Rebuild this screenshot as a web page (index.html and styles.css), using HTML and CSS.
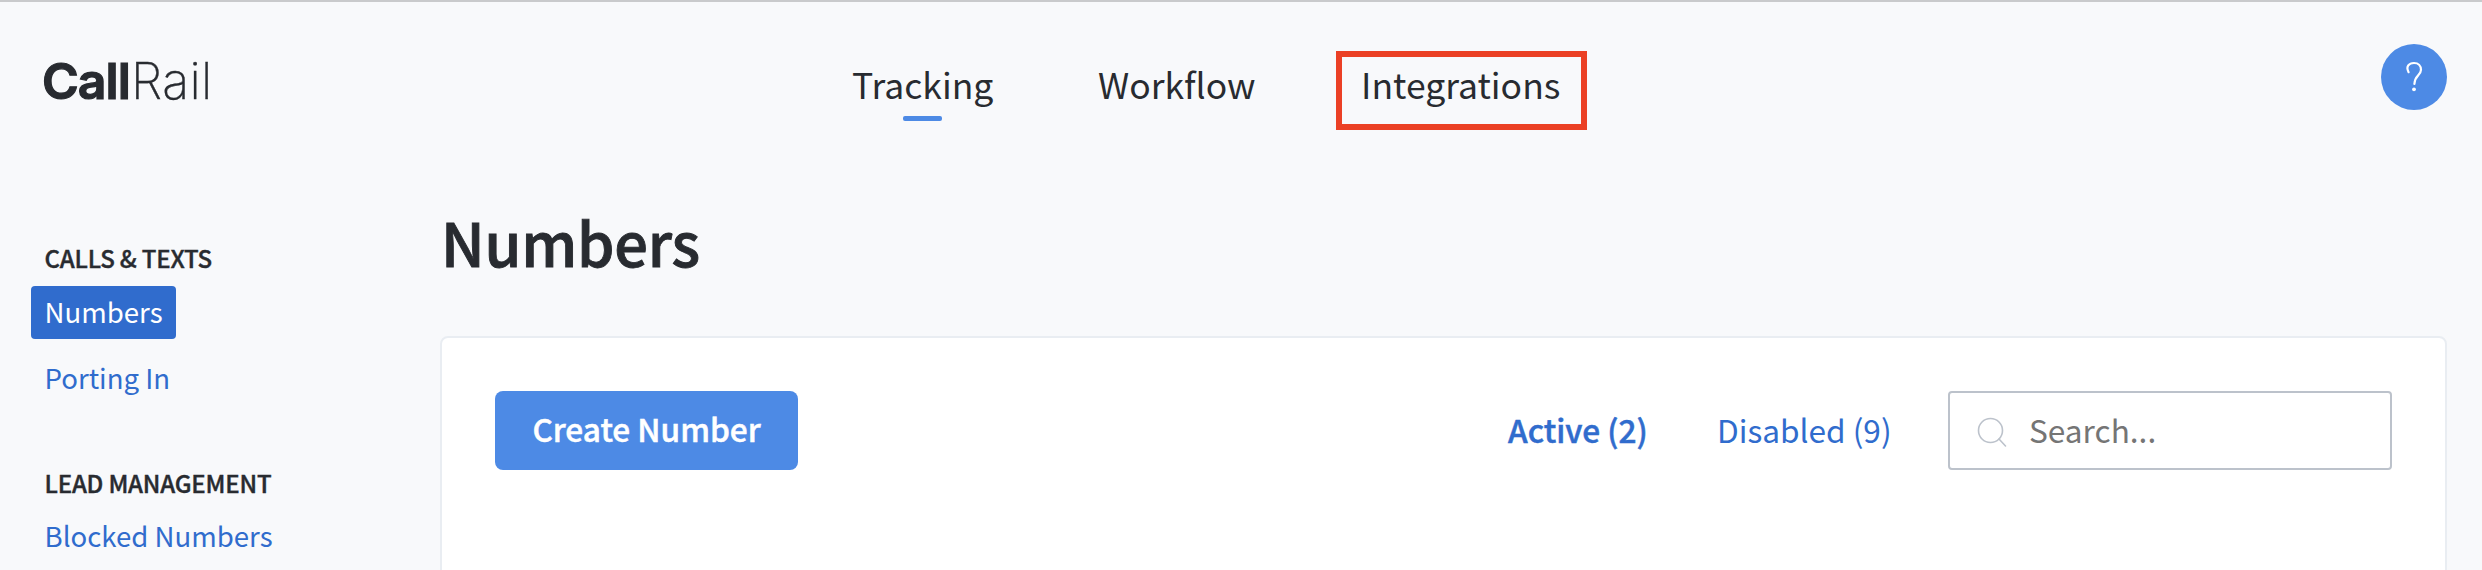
FILE: index.html
```html
<!DOCTYPE html>
<html lang="en">
<head>
<meta charset="utf-8">
<title>CallRail - Numbers</title>
<link rel="stylesheet" href="styles.css">
</head>
<body>
<header class="header">
  <a class="brand"><span class="brand-call">Call</span><span class="brand-rail">Rail</span></a>
  <nav class="nav">
    <a class="nav-link nav-tracking">Tracking</a>
    <a class="nav-link nav-workflow">Workflow</a>
    <a class="nav-link nav-integrations">Integrations</a>
  </nav>
  <button class="help" aria-label="Help">
    <svg width="66" height="66" viewBox="0 0 66 66" fill="none" stroke="#fff" stroke-width="2.200" stroke-linecap="round"><path d="M27.600 28.200C24.500 22.500 28 19 33 19C37.500 19 40 22 40 25.800C40 31.500 33.600 31.500 33.400 40"/><circle cx="33" cy="45.300" r="1.900" fill="#fff" stroke="none"/></svg>
  </button>
</header>
<div class="body">
  <aside class="sidebar">
    <h2 class="group">CALLS &amp; TEXTS</h2>
    <a class="side-link active">Numbers</a>
    <a class="side-link porting">Porting In</a>
    <h2 class="group lead">LEAD MANAGEMENT</h2>
    <a class="side-link blocked">Blocked Numbers</a>
  </aside>
  <main class="main">
    <h1 class="title">Numbers</h1>
    <section class="card">
      <button class="create">Create Number</button>
      <a class="tab tab-active">Active (2)</a>
      <a class="tab tab-disabled">Disabled (9)</a>
      <label class="search">
        <svg class="search-icon" width="30" height="30" viewBox="0 0 30 30" fill="none" stroke="#bcc2cb" stroke-width="1.600" stroke-linecap="round"><circle cx="13.500" cy="13.500" r="12"/><path d="M22 22l6.500 7"/></svg>
        <span class="placeholder">Search...</span>
      </label>
    </section>
  </main>
</div>
</body>
</html>
```
FILE: styles.css
```css
* { box-sizing: border-box; }
body {
  margin: 0;
  height: 570px;
  overflow: hidden;
  background: #f8f9fb;
  border-top: 2px solid #c9cacc;
  color: #282b30;
  font-family: "Noto Sans CJK SC", "Noto Sans", sans-serif;
  white-space: nowrap;
}
button { border: 0; padding: 0; font-family: inherit; }
.header { display: flex; height: 198px; padding: 0 35px 0 42px; align-items: flex-start; }
.brand { width: 810px; padding-top: 51px; font: 50px/56px Inter, sans-serif; color: #282b30; display: flex; }
.brand-call { font-weight: 600; letter-spacing: -1px; width: 89px; -webkit-text-stroke: 1.2px #282b30; stroke-linejoin: round; }
.brand-rail { font-weight: 200; letter-spacing: 0.4px; -webkit-text-stroke: 0.3px #282b30; }
.nav { display: flex; padding-top: 49px; }
.nav-link { font-size: 35.500px; line-height: 48px; }
.nav-tracking { width: 246px; padding-top: 9px; }
.nav-tracking::after { content: ""; display: block; width: 39px; height: 5px; margin: 8px 0 0 51px; border-radius: 2px; background: #4d8ae5; }
.nav-workflow { width: 238px; padding-top: 9px; }
.nav-integrations { width: 251px; height: 79px; padding: 3px 0 0 19px; border: 6px solid #eb4025; }
.help { margin: 42px 0 0 auto; width: 66px; height: 66px; border-radius: 50%; background: #4d8ae5; }
.help svg { display: block; }
.body { display: flex; height: 370px; }
.sidebar { width: 440px; padding: 42px 0 0 31px; display: flex; flex-direction: column; align-items: flex-start; }
.group { margin: 0; padding-left: 13.500px; height: 44px; font-size: 24px; line-height: 32px; font-weight: 500; letter-spacing: -0.200px; -webkit-text-stroke: 0.4px currentColor; }
.side-link { height: 53px; padding: 0 13.500px; font-size: 27.600px; line-height: 50px; color: #306ccd; }
.side-link.active { width: 145px; background: #306ccd; color: #fff; border-radius: 4px; }
.porting { margin-top: 13px; }
.lead { margin-top: 62px; }
.blocked { line-height: 48px; }
.main { width: 2007px; }
.title { margin: 0; padding-left: 1px; height: 136px; font-size: 59.500px; line-height: 82px; font-weight: 500; letter-spacing: -0.200px; -webkit-text-stroke: 0.9px currentColor; }
.card { height: 240px; background: #fff; border: 2px solid #e9edf2; border-radius: 8px 8px 0 0; padding: 53px 53px 0; display: flex; }
.create { width: 303px; height: 79px; padding-bottom: 4px; border-radius: 8px; background: #4d8ae5; color: #fff; font-size: 31.600px; font-weight: 500; line-height: 75px; -webkit-text-stroke: 0.5px currentColor; }
.tab { font-size: 31.600px; line-height: 77px; color: #306ccd; }
.tab-active { margin-left: 710px; width: 209px; font-weight: 500; -webkit-text-stroke: 0.5px currentColor; }
.tab-disabled { width: 231px; }
.search { width: 444px; height: 79px; border: 2px solid #bcc2cb; border-radius: 4px; display: flex; padding-left: 27px; }
.search-icon { margin-top: 24px; }
.placeholder { margin-left: 22px; color: #757575; font-size: 31.600px; line-height: 73px; }
```
